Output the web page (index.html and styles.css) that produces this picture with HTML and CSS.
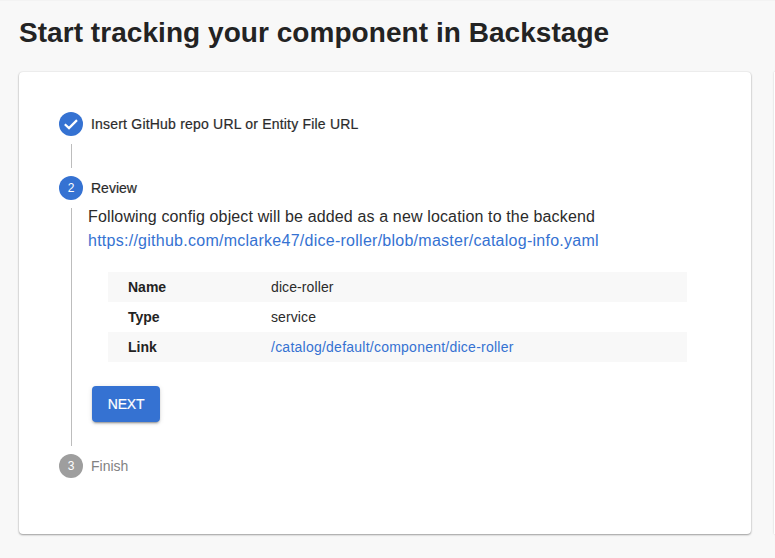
FILE: index.html
```html
<!DOCTYPE html>
<html lang="en">
<head>
    <meta charset="UTF-8">
    <meta name="viewport" content="width=device-width, initial-scale=1.0">
    <title>Start tracking your component in Backstage</title>
    <link rel="stylesheet" href="styles.css">
</head>
<body>
    <main class="page">
        <h1 class="title">Start tracking your component in Backstage</h1>
        <div class="row">
            <section class="card">
                <!-- Step 1: done -->
                <div class="step-head">
                    <span class="step-icon">
                        <svg viewBox="0 0 24 24" width="24" height="24"><circle cx="12" cy="12" r="12" fill="#3572d2"/><path d="M5.8 12.2l4.2 3.9 8-8" fill="none" stroke="#fff" stroke-width="2.2"/></svg>
                    </span>
                    <span class="step-label step-label-wide">Insert GitHub repo URL or Entity File URL</span>
                </div>
                <div class="connector"></div>

                <!-- Step 2: active -->
                <div class="step-head">
                    <span class="step-icon step-num">2</span>
                    <span class="step-label">Review</span>
                </div>
                <div class="step-body">
                    <p class="intro">Following config object will be added as a new location to the backend<br>
                    <a class="intro-link" href="#">https://github.com/mclarke47/dice-roller/blob/master/catalog-info.yaml</a></p>
                    <table class="info">
                        <tr><th>Name</th><td>dice-roller</td></tr>
                        <tr><th>Type</th><td>service</td></tr>
                        <tr><th>Link</th><td><a class="info-link" href="#">/catalog/default/component/dice-roller</a></td></tr>
                    </table>
                    <button class="next">NEXT</button>
                </div>

                <!-- Step 3: pending -->
                <div class="step-head pending">
                    <span class="step-icon step-num">3</span>
                    <span class="step-label">Finish</span>
                </div>
            </section>
            <div class="next-card"></div>
        </div>
    </main>
</body>
</html>
```

FILE: styles.css
```css
* {
    box-sizing: border-box;
}
html, body {
    margin: 0;
    height: 100%;
}
body {
    background-color: #f8f8f8;
    color: #2b2b2b;
    font-family: "Liberation Sans", Arial, sans-serif;
    overflow: hidden;
}
.page {
    padding: 1px 0 0 19px;
    border-top: 1px solid #f3f3f3;
}
.title {
    margin: 0;
    padding-top: 14px;
    height: 70px;
    font-size: 28px;
    line-height: 34px;
    font-weight: 700;
    letter-spacing: 0.05px;
    color: #232323;
}
.row {
    display: flex;
}
.card {
    flex: none;
    width: 732px;
    height: 462px;
    padding: 40px 40px 0;
    background-color: #fff;
    border-radius: 4px;
    box-shadow: 0 1px 2px rgba(0, 0, 0, 0.35), 0 0 2px rgba(0, 0, 0, 0.12);
}
.next-card {
    flex: none;
    width: 4px;
    height: 462px;
    margin-left: 23px;
    background-color: #fff;
    box-shadow: 0 0 2px rgba(0, 0, 0, 0.2);
}
.step-head {
    display: flex;
    align-items: center;
    height: 24px;
}
.step-icon {
    width: 24px;
    height: 24px;
    flex: none;
}
.step-icon svg {
    display: block;
}
.step-num {
    border-radius: 50%;
    background-color: #3572d2;
    color: #fff;
    font-size: 12px;
    line-height: 24px;
    text-align: center;
}
.step-label {
    margin-left: 8px;
    font-size: 14px;
    font-weight: 400;
    color: #2b2b2b;
    -webkit-text-stroke: 0.2px #2b2b2b;
}
.step-label-wide {
    letter-spacing: 0.2px;
}
.connector {
    height: 24px;
    margin: 8px 0 8px 12px;
    border-left: 1px solid #bdbdbd;
}
.step-body {
    display: flow-root;
    margin: 8px 0 8px 12px;
    padding-left: 16px;
    height: 238px;
    border-left: 1px solid #bdbdbd;
}
.intro {
    margin: -3px 0 0;
    font-size: 16px;
    line-height: 24px;
    letter-spacing: 0.14px;
    color: #2b2b2b;
}
a {
    color: #3572d2;
    text-decoration: none;
}
.intro-link {
    letter-spacing: 0.26px;
}
.info {
    width: 579px;
    margin: 19px 0 24px 20px;
    border-collapse: collapse;
    font-size: 14px;
}
.info tr {
    height: 30px;
}
.info tr:nth-child(odd) {
    background-color: #f8f8f8;
}
.info th {
    width: 163px;
    padding: 0 0 0 20px;
    text-align: left;
    font-weight: 700;
    color: #232323;
}
.info td {
    padding: 0;
    letter-spacing: 0.1px;
}
.info-link {
    letter-spacing: 0.24px;
}
.next {
    display: block;
    width: 68px;
    height: 36px;
    margin-left: 4px;
    padding: 0;
    border: none;
    border-radius: 4px;
    background-color: #3572d2;
    color: #fff;
    font-family: inherit;
    font-size: 14px;
    letter-spacing: -0.2px;
    -webkit-text-stroke: 0.2px #fff;
    box-shadow: 0 3px 1px -2px rgba(0, 0, 0, 0.2), 0 2px 2px rgba(0, 0, 0, 0.14), 0 1px 5px rgba(0, 0, 0, 0.12);
}
.pending .step-num {
    background-color: #9e9e9e;
}
.pending .step-label {
    color: #828282;
    -webkit-text-stroke: 0;
}
```
